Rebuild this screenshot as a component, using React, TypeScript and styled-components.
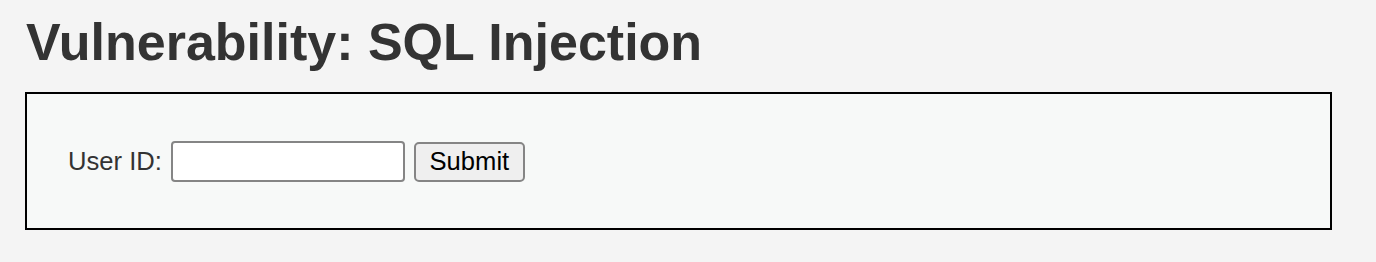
import * as React from 'react';
import styled, { createGlobalStyle } from 'styled-components';

const GlobalStyle = createGlobalStyle`
  html, body {
    margin: 0;
    padding: 0;
    background: #f4f4f4;
  }

  * {
    box-sizing: border-box;
  }
`;

const Page = styled.div`
  height: 262px;
  padding: 13px 0 0 25px;
  font-family: "Liberation Sans", Arial, sans-serif;
  color: #333333;
`;

const Title = styled.h1`
  margin: 0 0 20px 1px;
  font-size: 52px;
  font-weight: 700;
  line-height: 59px;
  color: #333333;
`;

const Panel = styled.div`
  width: 1307px;
  height: 138px;
  border: 2px solid #000000;
  background: #f7f9f8;
  padding: 47px 0 0 41px;
`;

const Form = styled.form`
  display: flex;
  align-items: center;
`;

const Label = styled.label`
  font-size: 25.6px;
  color: #333333;
  margin-right: 9px;
`;

const TextInput = styled.input`
  width: 234px;
  height: 41px;
  border: 2px solid #858585;
  border-radius: 4px;
  background: #ffffff;
  font-family: "Liberation Sans", Arial, sans-serif;
  font-size: 25.6px;
  padding: 0 4px;
  outline: none;
`;

const SubmitButton = styled.button`
  margin-left: 9px;
  width: 111px;
  height: 40px;
  border: 2px solid #858585;
  border-radius: 5px;
  background: #efefef;
  color: #000000;
  font-family: "Liberation Sans", Arial, sans-serif;
  font-size: 25.6px;
  padding: 0;
  cursor: pointer;
`;

export default function App() {
  return (
    <>
      <GlobalStyle />
      <Page>
        <Title>Vulnerability: SQL Injection</Title>
        <Panel>
          <Form onSubmit={(e) => e.preventDefault()}>
            <Label htmlFor="user-id">User ID:</Label>
            <TextInput id="user-id" type="text" name="id" />
            <SubmitButton type="submit">Submit</SubmitButton>
          </Form>
        </Panel>
      </Page>
    </>
  );
}
